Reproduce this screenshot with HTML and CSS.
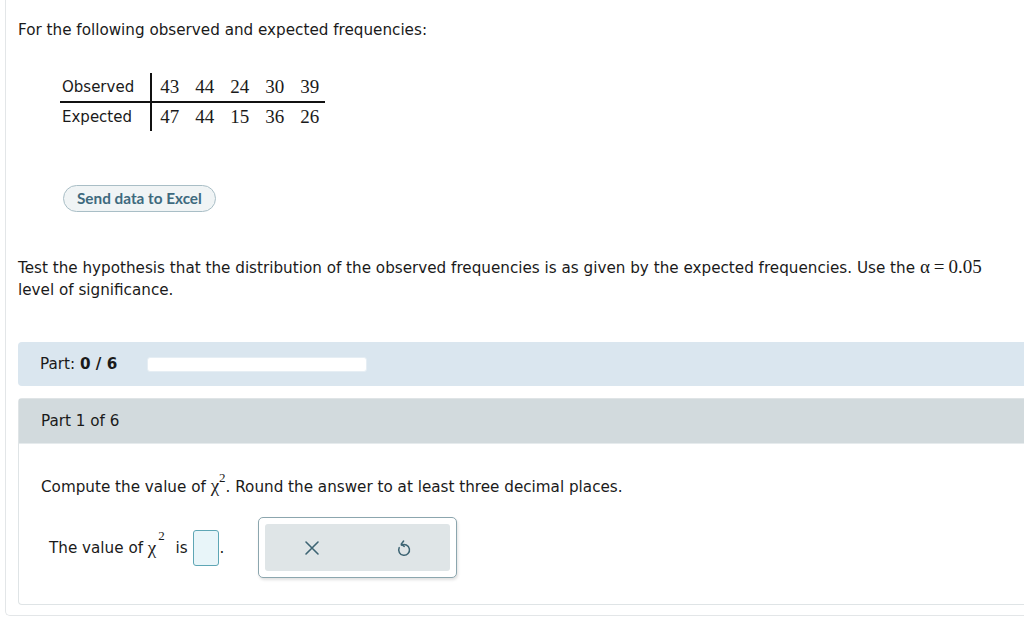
FILE: index.html
```html
<!DOCTYPE html>
<html>
<head>
<meta charset="utf-8">
<link rel="stylesheet" href="styles.css">
</head>
<body>
<div class="page">
  <p class="intro">For the following observed and expected frequencies:</p>
  <table class="freq">
    <tr class="row-obs">
      <th>Observed</th>
      <td class="first">43</td><td>44</td><td>24</td><td>30</td><td class="last">39</td>
    </tr>
    <tr class="row-exp">
      <th>Expected</th>
      <td class="first">47</td><td>44</td><td>15</td><td>36</td><td class="last">26</td>
    </tr>
  </table>
  <div class="excel-wrap"><button class="excel">Send data to Excel</button></div>
  <p class="hyp">Test the hypothesis that the distribution of the observed frequencies is as given by the expected frequencies. Use the <span class="math">α<span class="eq">=</span>0.05</span><br>level of significance.</p>

  <div class="progress">
    <span class="label">Part: <b>0 / 6</b></span>
    <div class="bar"></div>
  </div>

  <div class="card">
    <div class="card-head">Part 1 of 6</div>
    <div class="card-body">
      <p class="task">Compute the value of <span class="chi">χ<sup>2</sup></span>. Round the answer to at least three decimal places.</p>
      <div class="answer-row">
        <span class="answer">The value of <span class="chi chi2">χ<sup>2</sup></span> is <span class="input"></span>.</span>
        <div class="actions">
          <div class="actions-inner">
            <svg width="16" height="16" viewBox="0 0 16 16"><path d="M2 2 L14 14 M14 2 L2 14" stroke="#3d6473" stroke-width="1.6" fill="none" stroke-linecap="round"/></svg>
            <svg width="16" height="20" viewBox="0 0 16 20"><path d="M5.4 7.2 A5.4 5.4 0 1 1 3.2 9.6" stroke="#3d6473" stroke-width="1.5" fill="none" stroke-linecap="round"/><path d="M7.6 3 L5.2 6.2 L8.2 8.4" stroke="#3d6473" stroke-width="1.5" fill="none" stroke-linecap="round" stroke-linejoin="round"/></svg>
          </div>
        </div>
      </div>
    </div>
  </div>
</div>
</body>
</html>
```
FILE: styles.css
```css
html, body {
  margin: 0;
  padding: 0;
  background: #fff;
}
body {
  font-family: "DejaVu Sans", Verdana, sans-serif;
  font-size: 15.2px;
  color: #1a1a1a;
  overflow: hidden;
}
.page {
  margin-left: 5px;
  width: 1040px;
  height: 616px;
  border-left: 1px solid #e3e6e8;
  border-bottom: 1px solid #e3e6e8;
  border-bottom-left-radius: 5px;
  padding-left: 12px;
  box-sizing: border-box;
  padding-top: 20px;
}
p { margin: 0; }
.intro {
  line-height: 20px;
}
.freq {
  margin-top: 33px;
  margin-left: 42px;
  border-collapse: collapse;
}
.freq th {
  font-weight: normal;
  text-align: left;
  padding: 0 16px 0 2px;
  border-right: 2px solid #111;
  height: 28px;
  font-size: 15px;
}
.freq td {
  font-family: "Liberation Serif", "Times New Roman", serif;
  font-size: 19px;
  padding: 0 8px 0 8px;
  text-align: left;
}
.freq td.first { padding-left: 8px; }
.freq td.last { padding-right: 6px; }
.row-obs th, .row-obs td {
  border-bottom: 2px solid #111;
  vertical-align: middle;
}
.excel-wrap {
  margin-top: 54px;
  margin-left: 45px;
}
.excel {
  font-family: Lato, "Open Sans", sans-serif;
  font-weight: bold;
  font-size: 15.3px;
  color: #3e6a7e;
  background: #f0f4f5;
  border: 1px solid #a9bec6;
  border-radius: 14px;
  height: 27px;
  padding: 0 13px;
  line-height: 25px;
}
.hyp {
  margin-top: 44px;
  line-height: 22px;
}
.math {
  font-family: "Liberation Serif", "Times New Roman", serif;
  font-size: 19px;
}
.eq { margin: 0 4px; }
.progress {
  margin-top: 41px;
  background: #dae6ef;
  height: 44px;
  border-radius: 4px 0 0 4px;
  display: flex;
  align-items: center;
  padding-left: 22px;
}
.progress .label { width: 107px; }
.progress .bar {
  width: 218px;
  height: 13px;
  background: #fff;
  border-radius: 3px;
  border: 1px solid #e6eef4;
}
.card {
  margin-top: 12px;
  border: 1px solid #dfe4e6;
  border-right: none;
  border-radius: 4px 0 0 4px;
  height: 207px;
  box-sizing: border-box;
}
.card-head {
  background: #d2dadd;
  height: 44px;
  display: flex;
  align-items: center;
  padding-left: 22px;
  border-bottom: 1px solid #e6ebed;
}
.card-body {
  padding: 31px 0 0 22px;
}
.task {
  line-height: 22px;
}
.chi {
  font-family: "Liberation Serif", "Times New Roman", serif;
  font-size: 19px;
}
.chi sup {
  font-size: 13px;
  position: relative;
  top: -3px;
  vertical-align: super;
  line-height: 0;
}
.chi2 sup { margin-left: 2px; margin-right: 6px; top: -6px; }
.answer-row {
  margin-top: 19px;
  display: flex;
  align-items: center;
}
.answer {
  margin-left: 8px;
  display: flex;
  align-items: center;
  white-space: pre;
}
.input {
  display: inline-block;
  width: 24px;
  height: 34px;
  border: 1px solid #5ea6b5;
  background: #e8f5f9;
  border-radius: 3px;
  margin-right: 1px;
}
.actions {
  margin-left: 34px;
  width: 199px;
  height: 61px;
  border: 1px solid #8ca6ae;
  border-radius: 5px;
  box-sizing: border-box;
  padding: 6px;
  background: #fff;
  box-shadow: 1px 2px 3px rgba(0,0,0,0.12);
}
.actions-inner {
  height: 100%;
  background: #dfe5e7;
  border-radius: 3px;
  display: flex;
  align-items: center;
  justify-content: space-between;
  padding: 0 38px 0 39px;
}
```
